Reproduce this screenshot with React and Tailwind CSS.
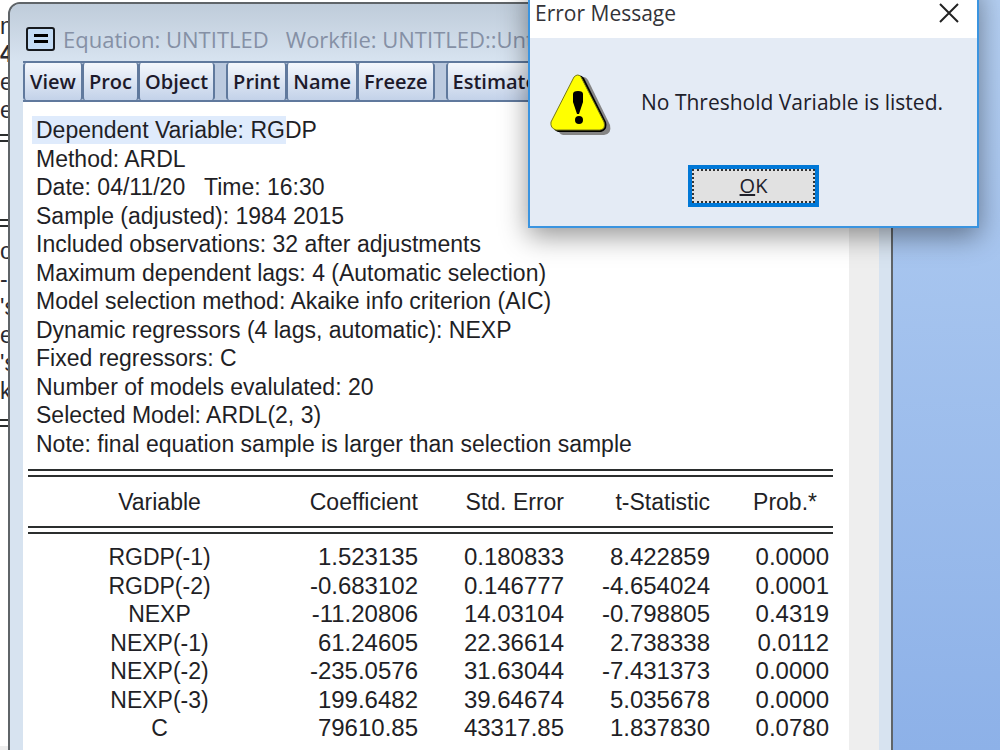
import React from "react";

const notes = [
    "Dependent Variable: RGDP",
    "Method: ARDL",
    "Date: 04/11/20   Time: 16:30",
    "Sample (adjusted): 1984 2015",
    "Included observations: 32 after adjustments",
    "Maximum dependent lags: 4 (Automatic selection)",
    "Model selection method: Akaike info criterion (AIC)",
    "Dynamic regressors (4 lags, automatic): NEXP",
    "Fixed regressors: C",
    "Number of models evalulated: 20",
    "Selected Model: ARDL(2, 3)",
    "Note: final equation sample is larger than selection sample",
];

const headings = ["Variable", "Coefficient", "Std. Error", "t-Statistic", "Prob.*"];

const rows = [
    ["RGDP(-1)", "1.523135", "0.180833", "8.422859", "0.0000"],
    ["RGDP(-2)", "-0.683102", "0.146777", "-4.654024", "0.0001"],
    ["NEXP", "-11.20806", "14.03104", "-0.798805", "0.4319"],
    ["NEXP(-1)", "61.24605", "22.36614", "2.738338", "0.0112"],
    ["NEXP(-2)", "-235.0576", "31.63044", "-7.431373", "0.0000"],
    ["NEXP(-3)", "199.6482", "39.64674", "5.035678", "0.0000"],
    ["C", "79610.85", "43317.85", "1.837830", "0.0780"],
];

const toolGroups = [["View", "Proc", "Object"], ["Print", "Name", "Freeze"], ["Estimate"]];

const DoubleRule = () => <div className="h-2 w-full border-y-2 border-[#2b2e2e]" />;

// workfile window, mostly hidden behind the equation window
const BackWindow = () => (
    <div className="absolute inset-y-0 left-0 right-[120px] border-b-4 border-[#eeeeee] bg-white text-[23px] leading-7 text-[#2a2a30]">
        <div className="flex flex-col items-start whitespace-pre">
            <span className="mt-3">n</span>
            <span className="font-bold">4</span>
            <span>e</span>
            <span>e</span>
            <div className="mt-2.5 w-full"><DoubleRule /></div>
            <div className="mt-[77px] w-full"><DoubleRule /></div>
            <span className="mt-2.5">o</span>
            <span>-2</span>
            <span>&apos;s</span>
            <span>e</span>
            <span>&apos;s</span>
            <span>k</span>
            <div className="mt-3.5 w-full"><DoubleRule /></div>
        </div>
    </div>
);

const Toolbar = () => (
    <div className="flex h-[41px] overflow-hidden border-y-2 border-[#60799d] bg-[#bccadf]">
        {toolGroups.map((group) => (
            <div key={group[0]} className="mr-3 flex shrink-0">
                {group.map((name) => (
                    <button
                        key={name}
                        className="-mr-px rounded-[3px] border-x-2 border-[#60799d] bg-linear-to-b from-[#f4f7fc] to-[#c3d2e9] px-[5px] font-['Open_Sans',sans-serif] text-[20px] font-semibold text-[#1d1a2b]"
                    >
                        {name}
                    </button>
                ))}
            </div>
        ))}
    </div>
);

const Results = () => (
    <div className="pt-3.5 pl-[5px] pr-4 text-[23px] leading-7 text-[#1f1f26]">
        <div className="ml-1 grid h-[342px] auto-rows-fr items-center whitespace-pre">
            {notes.map((line, index) => (
                <p
                    key={line}
                    className={index === 0 ? "w-[254px] bg-[#dfebfc] pl-1" : "pl-1"}
                >
                    {line}
                </p>
            ))}
        </div>

        <table className="mt-[11px] w-full table-fixed border-collapse">
            <colgroup>
                <col className="w-[263px]" />
                <col className="w-[127px]" />
                <col className="w-[146px]" />
                <col className="w-[146px]" />
                <col />
            </colgroup>
            <thead>
                <tr>
                    <td colSpan={5} className="p-0"><DoubleRule /></td>
                </tr>
                <tr className="h-[49px]">
                    {headings.map((text, index) => (
                        <th
                            key={text}
                            scope="col"
                            className={`p-0 font-normal ${index === 0 ? "text-center" : index === 4 ? "pr-4 text-right" : "text-right"}`}
                        >
                            {text}
                        </th>
                    ))}
                </tr>
                <tr>
                    <td colSpan={5} className="p-0 pb-[9px]"><DoubleRule /></td>
                </tr>
            </thead>
            <tbody>
                {rows.map((row) => (
                    <tr key={row[0]} className="odd:h-7 even:h-[29px]">
                        {row.map((value, index) => (
                            <td
                                key={index}
                                className={`p-0 ${index === 0 ? "text-center" : index === 4 ? "pr-1 text-right text-[24px] leading-7" : "text-right text-[24px] leading-7"}`}
                            >
                                {value}
                            </td>
                        ))}
                    </tr>
                ))}
            </tbody>
        </table>
    </div>
);

const EquationWindow = () => (
    <section className="absolute -bottom-4 left-2 right-[107px] top-[2px] flex flex-col overflow-hidden rounded-t-xl border-2 border-[#5f6468] bg-[#d7e3f0] pl-[13px] pr-3">
        <header className="-ml-[13px] -mr-3 flex h-[57px] items-center gap-2 bg-linear-to-b from-[#bfccda] to-[#d7e3f0] pl-4 pt-3">
            <button
                aria-label="Window menu"
                className="flex h-6 w-[29px] shrink-0 flex-col items-center justify-center gap-[3px] rounded-[3px] border-2 border-[#16191d] bg-[#c4dcf5]"
            >
                <span className="h-[3px] w-3.5 bg-black" />
                <span className="h-[3px] w-3.5 bg-black" />
            </button>
            <h1 className="whitespace-pre font-['Open_Sans',sans-serif] text-[22px] leading-7 text-[#8590a5]">
                Equation: UNTITLED   Workfile: UNTITLED::Untitled
            </h1>
        </header>
        <Toolbar />
        <div className="flex flex-1">
            <main className="flex-1 bg-white">
                <Results />
            </main>
            <div className="w-[30px] bg-[#eeeeee]" />
        </div>
    </section>
);

const WarningIcon = () => (
    <svg viewBox="0 0 62 62" className="h-[62px] w-[62px]" aria-hidden="true">
        <path d="M31 4 Q35 1 38 6 L60 51 Q62 60 54 61 L13 61 Q8 60 9 55Z" fill="#858585" />
        <path d="M25 3 Q30 -1 34 4 L56 48 Q58 56 51 58 L8 58 Q2 56 4 50Z" fill="#000" />
        <path d="M24 3 Q28 -1 31 3 L54 48 Q56 55 50 56 L6 56 Q0 54 1 48Z" fill="#ffff00" stroke="#77771a" strokeWidth="1" />
        <path d="M23 20 Q23 17 28 17 Q33 17 33 20 L33 28 L29 40 L27 40 L23 28Z" fill="#000" />
        <circle cx="29" cy="46" r="4" fill="#000" />
    </svg>
);

const ErrorDialog = () => (
    <div
        role="dialog"
        aria-labelledby="dialog-title"
        className="absolute -top-4 left-[528px] right-[21px] flex h-[244px] flex-col border-2 border-[#3a94e0] bg-[#e4ebf5] font-['Open_Sans',sans-serif] shadow-[0_8px_26px_rgba(0,0,0,0.42)]"
    >
        <div className="flex h-[52px] items-center justify-between bg-white pl-[5px] pr-[18px] pt-0.5">
            <h2 id="dialog-title" className="text-[21px] leading-7 text-[#333338]">Error Message</h2>
            <button aria-label="Close">
                <svg viewBox="0 0 20 20" className="h-5 w-5" aria-hidden="true">
                    <path d="M1 1 L19 19 M19 1 L1 19" stroke="#222" strokeWidth="2" />
                </svg>
            </button>
        </div>
        <div className="flex items-center gap-[29px] pl-5 pt-9">
            <WarningIcon />
            <p className="whitespace-nowrap pb-1.5 text-[21px] leading-7 text-[#20202a]">No Threshold Variable is listed.</p>
        </div>
        <button className="mx-auto mt-[29px] h-[42px] w-[131px] border-4 border-[#0078d7] bg-[#e1e1e1] text-[20px] leading-7 text-[#20202a]">
            <span className="flex h-full items-center justify-center border-2 border-dotted border-[#333]">
                <u>O</u>K
            </span>
        </button>
    </div>
);

export default function App() {
    return (
        <div className="relative h-screen overflow-hidden bg-linear-to-b from-[#b4cff2] to-[#8db1e8] font-['Liberation_Sans',Arial,sans-serif]">
            <BackWindow />
            <EquationWindow />
            <ErrorDialog />
        </div>
    );
}
